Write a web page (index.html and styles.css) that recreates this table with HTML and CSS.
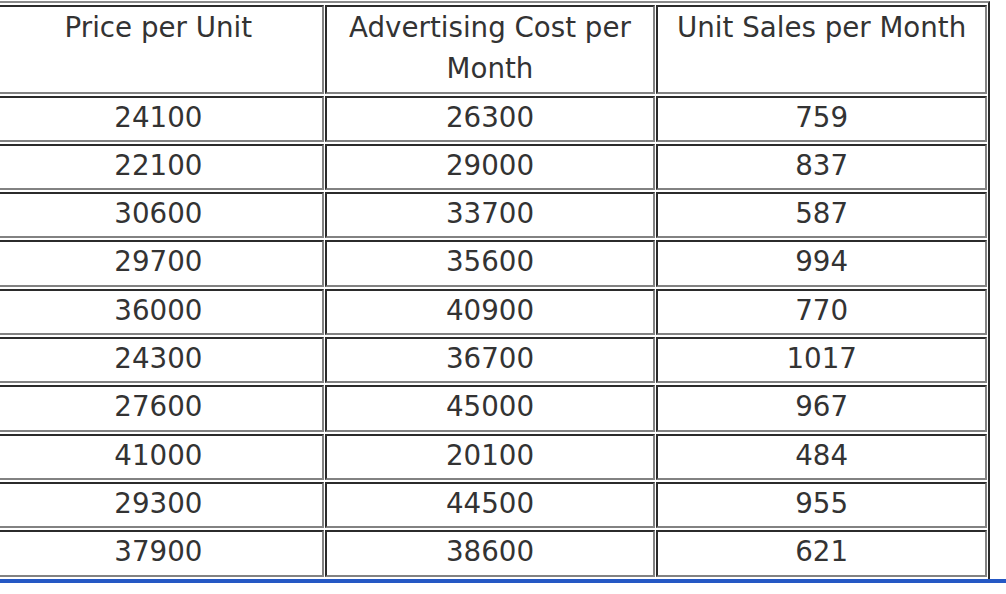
FILE: index.html
```html
<!DOCTYPE html>
<html lang="en">
<head>
<meta charset="utf-8">
<title>Price, Advertising and Unit Sales</title>
<link rel="stylesheet" href="styles.css">
</head>
<body>
<div class="frame">
  <table class="data">
    <colgroup><col class="c"><col class="c"><col class="c"></colgroup>
    <thead>
      <tr><th>Price per Unit</th><th>Advertising Cost per Month</th><th>Unit Sales per Month</th></tr>
    </thead>
    <tbody>
      <tr><td>24100</td><td>26300</td><td>759</td></tr>
      <tr><td>22100</td><td>29000</td><td>837</td></tr>
      <tr><td>30600</td><td>33700</td><td>587</td></tr>
      <tr><td>29700</td><td>35600</td><td>994</td></tr>
      <tr><td>36000</td><td>40900</td><td>770</td></tr>
      <tr><td>24300</td><td>36700</td><td>1017</td></tr>
      <tr><td>27600</td><td>45000</td><td>967</td></tr>
      <tr><td>41000</td><td>20100</td><td>484</td></tr>
      <tr><td>29300</td><td>44500</td><td>955</td></tr>
      <tr><td>37900</td><td>38600</td><td>621</td></tr>
    </tbody>
  </table>
</div>
<div class="rule"></div>
</body>
</html>
```
FILE: styles.css
```css
html, body {
  margin: 0;
  padding: 0;
  background: #ffffff;
}
body {
  font-family: "DejaVu Sans", Lato, sans-serif;
  color: #333333;
}
.frame {
  height: 579px;
  padding-top: 1px;
  overflow: hidden;
  box-sizing: border-box;
}
.data {
  margin-left: -10px;
  width: 1000px;
  table-layout: fixed;
  border-collapse: separate;
  border-spacing: 1.5px 2px;
  border-style: solid;
  border-width: 2px;
  border-color: #8a8a8a #2b2b2b #2b2b2b #8a8a8a;
}
.data .c {
  width: 330px;
}
.data th,
.data td {
  padding: 0 4px 2px;
  text-align: center;
  font-size: 27.7px;
  line-height: 40.3px;
  font-weight: normal;
  border-style: solid;
  border-width: 2px;
  border-color: #2b2b2b #828282 #828282 #2b2b2b;
}
.data th {
  vertical-align: top;
  line-height: 41.3px;
  padding-bottom: 2px;
}
.rule {
  height: 4px;
  background: #2558c4;
}
```
